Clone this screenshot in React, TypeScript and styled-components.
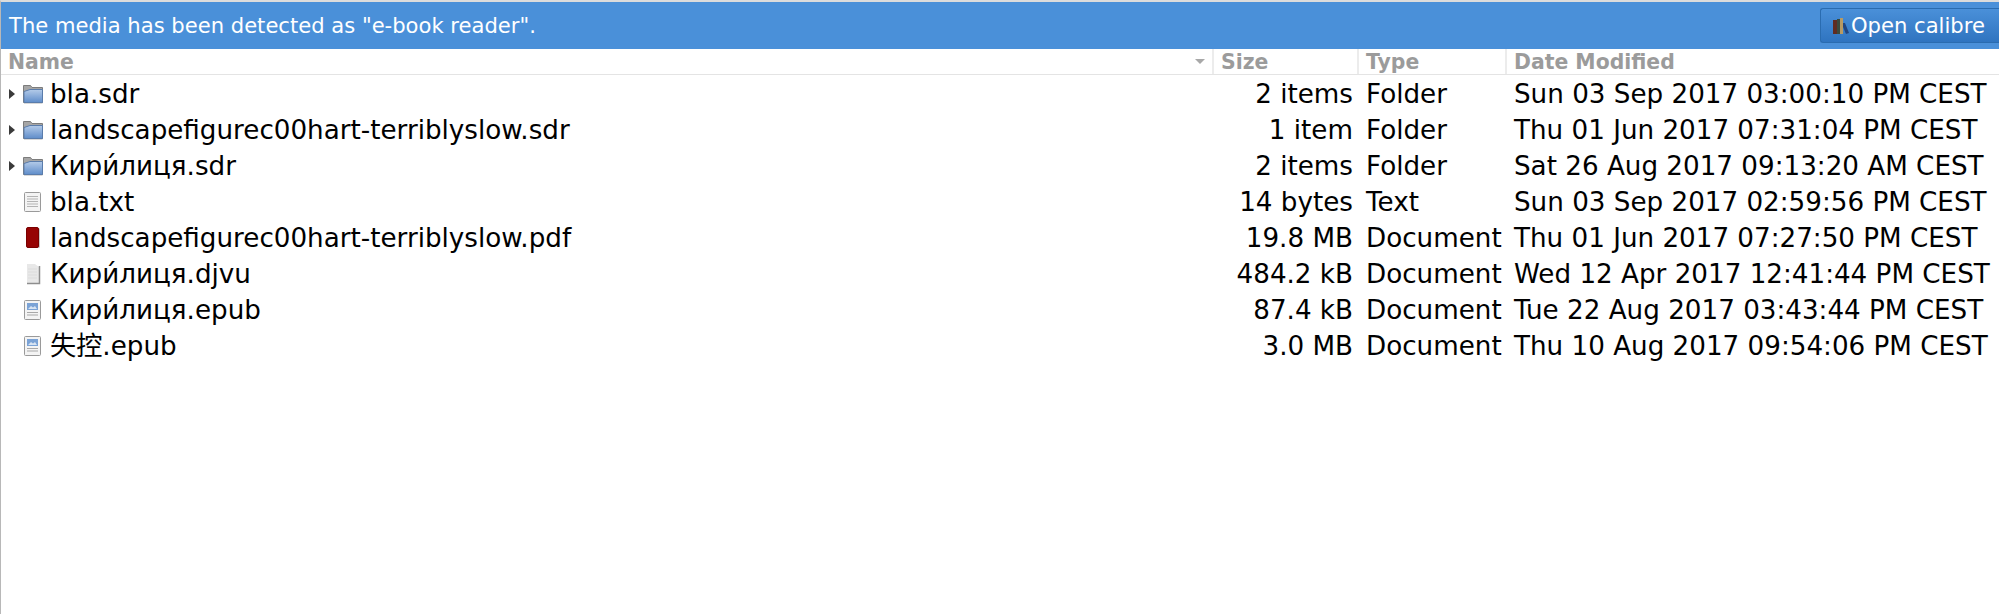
import styled, { createGlobalStyle } from 'styled-components'

const GlobalStyle = createGlobalStyle`
  html, body {
    margin: 0;
    height: 100%;
    overflow: hidden;
    background: #ffffff;
  }
`

const columns = '1213px 145px 148px 1fr'

const Window = styled.div`
  width: 1999px;
  height: 614px;
  box-sizing: border-box;
  border-top: 2px solid #dcdcdc;
  border-left: 1px solid #b8b8b8;
  background: #ffffff;
  font-family: 'DejaVu Sans', 'Noto Sans CJK SC', sans-serif;
  overflow: hidden;
`

const InfoBar = styled.div`
  height: 47px;
  display: flex;
  align-items: center;
  justify-content: space-between;
  padding-left: 8px;
  background: #4a90d9;
  color: #ffffff;
  font-size: 21.1px;
`

const BarButton = styled.div`
  width: 179px;
  height: 35px;
  box-sizing: border-box;
  display: flex;
  align-items: center;
  gap: 2px;
  padding-left: 12px;
  border: 1px solid #2a6cb0;
  border-right: none;
  border-radius: 3px 0 0 3px;
  background: linear-gradient(#4a90d9, #2f74c0);
  font-size: 21.1px;
  white-space: nowrap;
`

const HeaderRow = styled.div`
  height: 26px;
  box-sizing: border-box;
  display: grid;
  grid-template-columns: ${columns};
  border-bottom: 1px solid #e4e4e4;
`

const HeaderCell = styled.div`
  display: flex;
  align-items: center;
  justify-content: space-between;
  padding: 0 7px;
  border-right: 2px solid #ececec;
  color: #9b9b9b;
  font-size: 20.4px;
  font-weight: 700;

  &:last-child {
    border-right: none;
  }
`

const SortArrow = styled.span`
  width: 0;
  height: 0;
  border-left: 5px solid transparent;
  border-right: 5px solid transparent;
  border-top: 5px solid #a8a8a8;
`

const FileList = styled.div`
  padding-top: 1px;
`

const Row = styled.div`
  height: 36px;
  display: grid;
  grid-template-columns: ${columns};
  align-items: center;
  color: #000000;
  font-size: 26.2px;
  line-height: 30px;
  white-space: nowrap;
`

const NameCell = styled.div`
  display: flex;
  align-items: center;
`

const Expander = styled.span<{ $visible: boolean }>`
  width: 0;
  height: 0;
  margin-left: 8px;
  border-top: 5px solid transparent;
  border-bottom: 5px solid transparent;
  border-left: 6px solid ${(p) => (p.$visible ? '#3a3a3a' : 'transparent')};
`

const IconSlot = styled.span`
  width: 20px;
  height: 22px;
  margin: 0 7px 0 8px;
  display: flex;
  flex-shrink: 0;
`

const SizeCell = styled.div`
  text-align: right;
  padding-right: 6px;
`

const TypeCell = styled.div`
  padding-left: 7px;
`

const DateCell = styled.div`
  padding-left: 7px;
`

type Kind = 'folder' | 'text' | 'pdf' | 'djvu' | 'epub'

function FileIcon({ kind }: { kind: Kind }) {
  if (kind === 'folder') {
    return (
      <svg width="20" height="22" viewBox="0 0 20 22">
        <defs>
          <linearGradient id="folderFront" x1="0" y1="0" x2="0" y2="1">
            <stop offset="0" stopColor="#b4cbe9" />
            <stop offset="1" stopColor="#5f8dca" />
          </linearGradient>
        </defs>
        <path d="M.5 2.500h7l1.500 2h10.500v15H.5z" fill="#a6a6a6" stroke="#7c7c7c" />
        <path d="M1 8.500l6-2h12.500v13H1z" fill="url(#folderFront)" stroke="#5a7cab" />
        <path d="M1 20.500h18.500" stroke="#d8d8d8" />
      </svg>
    )
  }
  if (kind === 'pdf') {
    return (
      <svg width="20" height="22" viewBox="0 0 20 22">
        <rect x="4" y="1" width="13" height="20" rx="1.500" fill="#c8c8c8" />
        <rect x="3.500" y="0.500" width="12" height="20" rx="1.500" fill="#960404" stroke="#7a0000" />
      </svg>
    )
  }
  if (kind === 'djvu') {
    return (
      <svg width="20" height="22" viewBox="0 0 20 22">
        <path d="M4 1h8l4 3v16H4z" fill="#e8e8e8" />
        <path d="M5 6h9M5 9h9M5 12h9M5 15h9" stroke="#dcdcdc" />
        <path d="M16.500 3v17.500H4" fill="none" stroke="#8e8e8e" strokeWidth="1.500" />
      </svg>
    )
  }
  return (
    <svg width="20" height="22" viewBox="0 0 20 22">
      <rect x="1.500" y="1.500" width="16" height="19" rx="1" fill="#f4f4f4" stroke="#9a9a9a" />
      {kind === 'epub' ? (
        <>
          <rect x="4" y="4" width="11" height="7" fill="#7ba3d6" />
          <path d="M5 10l3-3 2 1.500 2-1.500 2 3z" fill="#d8e4f2" />
          <path d="M4 13.500h11M4 16h11" stroke="#a8a8a8" />
        </>
      ) : (
        <path d="M4 5.500h11M4 8h11M4 10.500h11M4 13h11M4 15.500h11" stroke="#b4b4b4" />
      )}
    </svg>
  )
}

const files: { name: string; size: string; type: string; date: string; kind: Kind }[] = [
  { name: 'bla.sdr', size: '2 items', type: 'Folder', date: 'Sun 03 Sep 2017 03:00:10 PM CEST', kind: 'folder' },
  { name: 'landscapefigurec00hart-terriblyslow.sdr', size: '1 item', type: 'Folder', date: 'Thu 01 Jun 2017 07:31:04 PM CEST', kind: 'folder' },
  { name: 'Кири́лиця.sdr', size: '2 items', type: 'Folder', date: 'Sat 26 Aug 2017 09:13:20 AM CEST', kind: 'folder' },
  { name: 'bla.txt', size: '14 bytes', type: 'Text', date: 'Sun 03 Sep 2017 02:59:56 PM CEST', kind: 'text' },
  { name: 'landscapefigurec00hart-terriblyslow.pdf', size: '19.8 MB', type: 'Document', date: 'Thu 01 Jun 2017 07:27:50 PM CEST', kind: 'pdf' },
  { name: 'Кири́лиця.djvu', size: '484.2 kB', type: 'Document', date: 'Wed 12 Apr 2017 12:41:44 PM CEST', kind: 'djvu' },
  { name: 'Кири́лиця.epub', size: '87.4 kB', type: 'Document', date: 'Tue 22 Aug 2017 03:43:44 PM CEST', kind: 'epub' },
  { name: '失控.epub', size: '3.0 MB', type: 'Document', date: 'Thu 10 Aug 2017 09:54:06 PM CEST', kind: 'epub' },
]

function App() {
  return (
    <Window>
      <GlobalStyle />
      <InfoBar>
        <span>The media has been detected as "e-book reader".</span>
        <BarButton>
          <svg width="16" height="16" viewBox="0 0 16 16">
            <rect x="0" y="2" width="4" height="14" fill="#5f2c22" />
            <rect x="4" y="1" width="3" height="15" fill="#3a4a3e" />
            <rect x="7" y="0" width="3" height="16" fill="#b89a62" />
            <path d="M10 5l2 0 4 10-3 1-3-7z" fill="#22457f" />
          </svg>
          Open calibre
        </BarButton>
      </InfoBar>
      <HeaderRow>
        <HeaderCell>
          Name
          <SortArrow />
        </HeaderCell>
        <HeaderCell>Size</HeaderCell>
        <HeaderCell>Type</HeaderCell>
        <HeaderCell>Date Modified</HeaderCell>
      </HeaderRow>
      <FileList>
        {files.map((f) => (
          <Row key={f.name}>
            <NameCell>
              <Expander $visible={f.kind === 'folder'} />
              <IconSlot>
                <FileIcon kind={f.kind} />
              </IconSlot>
              {f.name}
            </NameCell>
            <SizeCell>{f.size}</SizeCell>
            <TypeCell>{f.type}</TypeCell>
            <DateCell>{f.date}</DateCell>
          </Row>
        ))}
      </FileList>
    </Window>
  )
}

export default App
